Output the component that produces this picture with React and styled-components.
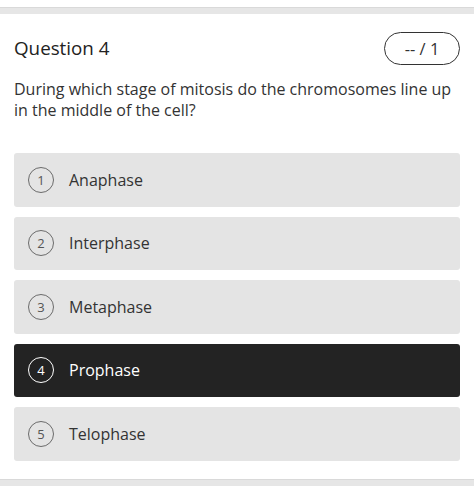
import React from "react";
import styled, { createGlobalStyle } from "styled-components";

const Global = createGlobalStyle`
  html, body { margin: 0; padding: 0; background: #ffffff; }
  body { font-family: "Open Sans", "Noto Sans", sans-serif; color: #333; }
  * { box-sizing: border-box; }
`;

const Page = styled.div`
  width: 474px;
  height: 496px;
  padding-top: 7px;
  background: #fff;
`;

const Band = styled.div`
  height: 7px;
  background: #e6e6e6;
  border-top: 1px solid #d9d9d9;
`;

const Card = styled.div`
  padding: 18px 14px 18.5px;
`;

const Header = styled.div`
  display: flex;
  align-items: center;
  justify-content: space-between;
  height: 33px;
`;

const Title = styled.h2`
  margin: 0;
  font-size: 18.8px;
  font-weight: 400;
  color: #222;
  line-height: 1;
`;

const Score = styled.div`
  width: 76px;
  height: 33px;
  border: 1.5px solid #333;
  border-radius: 17px;
  display: flex;
  align-items: center;
  justify-content: center;
  font-size: 16.5px;
  color: #333;
`;

const Prompt = styled.p`
  margin: 14px 0 32px;
  font-size: 16px;
  line-height: 21px;
  color: #333;
`;

const Options = styled.div`
  display: flex;
  flex-direction: column;
  gap: 10px;
`;

const Option = styled.div`
  height: 53.5px;
  border-radius: 3px;
  background: ${(p) => (p.$selected ? "#232323" : "#e4e4e4")};
  color: ${(p) => (p.$selected ? "#ffffff" : "#333333")};
  display: flex;
  align-items: center;
  padding-left: 14px;
  gap: 15px;
  font-size: 16px;
`;

const Num = styled.span`
  width: 26px;
  height: 26px;
  border-radius: 50%;
  border: 1.5px solid ${(p) => (p.$selected ? "#ffffff" : "#6b6b6b")};
  color: ${(p) => (p.$selected ? "#ffffff" : "#555")};
  display: flex;
  align-items: center;
  justify-content: center;
  font-size: 13px;
  flex-shrink: 0;
`;

const choices = ["Anaphase", "Interphase", "Metaphase", "Prophase", "Telophase"];

export default function App() {
  return (
    <Page>
      <Global />
      <Band />
      <Card>
        <Header>
          <Title>Question 4</Title>
          <Score>-- / 1</Score>
        </Header>
        <Prompt>
          During which stage of mitosis do the chromosomes line up in the middle of the cell?
        </Prompt>
        <Options>
          {choices.map((c, i) => (
            <Option key={c} $selected={i === 3}>
              <Num $selected={i === 3}>{i + 1}</Num>
              {c}
            </Option>
          ))}
        </Options>
      </Card>
      <Band />
    </Page>
  );
}
